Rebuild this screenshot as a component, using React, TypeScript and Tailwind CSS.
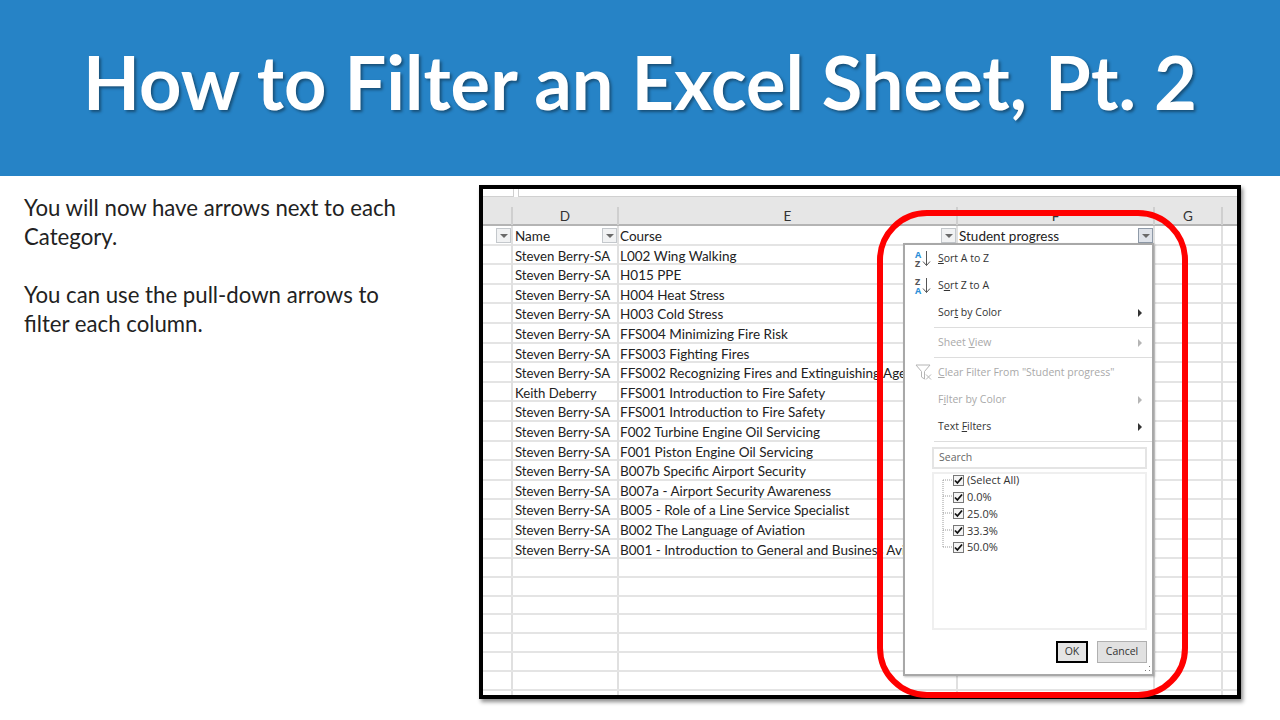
const rows = [
  ["Steven Berry-SA", "L002 Wing Walking"],
  ["Steven Berry-SA", "H015 PPE"],
  ["Steven Berry-SA", "H004 Heat Stress"],
  ["Steven Berry-SA", "H003 Cold Stress"],
  ["Steven Berry-SA", "FFS004 Minimizing Fire Risk"],
  ["Steven Berry-SA", "FFS003 Fighting Fires"],
  ["Steven Berry-SA", "FFS002 Recognizing Fires and Extinguishing Agents"],
  ["Keith Deberry", "FFS001 Introduction to Fire Safety"],
  ["Steven Berry-SA", "FFS001 Introduction to Fire Safety"],
  ["Steven Berry-SA", "F002 Turbine Engine Oil Servicing"],
  ["Steven Berry-SA", "F001 Piston Engine Oil Servicing"],
  ["Steven Berry-SA", "B007b Specific Airport Security"],
  ["Steven Berry-SA", "B007a - Airport Security Awareness"],
  ["Steven Berry-SA", "B005 - Role of a Line Service Specialist"],
  ["Steven Berry-SA", "B002 The Language of Aviation"],
  ["Steven Berry-SA", "B001 - Introduction to General and Business Aviation"],
];

const gridCols = "grid grid-cols-[30px_106px_339px_197px_68px_1fr]";
const cell = "border-r-2 border-[#e0e0e0] whitespace-nowrap";

const FilterButton = ({ active = false }: { active?: boolean }) => (
  <span
    className={`absolute right-0 top-[2px] flex h-[15px] w-[15px] items-center justify-center border ${
      active ? "border-[#8f9aa8] bg-[#dfe3ea]" : "border-[#c4c8cc] bg-[#f1f2f3]"
    }`}
  >
    <span className="h-0 w-0 border-x-[4px] border-t-[4px] border-x-transparent border-t-[#6a6a6a]" />
  </span>
);

const SortIcon = ({ first, second }: { first: string; second: string }) => (
  <span className="flex w-[33px] items-center pl-[10px]">
    <span className="flex flex-col text-[9px] font-bold leading-[9px]">
      <span className={first === "A" ? "text-[#2b8fd8]" : "text-[#555555]"}>{first}</span>
      <span className={second === "A" ? "text-[#2b8fd8]" : "text-[#555555]"}>{second}</span>
    </span>
    <svg width="9" height="17" viewBox="0 0 9 17" className="ml-[1px]">
      <path d="M4.5 1v14.5M1 11.5l3.5 4 3.5-4" fill="none" stroke="#555555" strokeWidth="1" />
    </svg>
  </span>
);

const ClearFilterIcon = () => (
  <span className="flex w-[33px] items-center pl-[10px]">
    <svg width="18" height="17" viewBox="0 0 18 17">
      <path d="M1 1h14l-5.5 6.5V15L6.5 13V7.5z" fill="none" stroke="#b5b5b5" strokeWidth="1" />
      <path d="M11 10.5l5 5M16 10.5l-5 5" fill="none" stroke="#b5b5b5" strokeWidth="1" />
    </svg>
  </span>
);

const MenuItem = ({
  children,
  icon,
  disabled = false,
  arrow = false,
}: {
  children: React.ReactNode;
  icon?: React.ReactNode;
  disabled?: boolean;
  arrow?: boolean;
}) => (
  <div className={`flex h-[27px] items-center ${disabled ? "text-[#a9a9a9]" : "text-[#333333]"}`}>
    {icon ?? <span className="w-[33px]" />}
    <span className="flex-1 whitespace-nowrap">{children}</span>
    {arrow && (
      <span
        className={`mr-[10px] h-0 w-0 border-y-[4px] border-l-[4px] border-y-transparent ${
          disabled ? "border-l-[#b5b5b5]" : "border-l-[#333333]"
        }`}
      />
    )}
  </div>
);

const Separator = () => <div className="my-[1px] ml-[29px] h-[1px] bg-[#dddddd]" />;

const CheckRow = ({ label }: { label: string }) => (
  <div className="flex h-[16.8px] items-center pl-[19px]">
    <span className="flex h-[11px] w-[11px] items-center justify-center border border-[#777777] bg-[#f4f4f4]">
      <svg width="9" height="9" viewBox="0 0 9 9">
        <path d="M1 4.5l2.4 2.5L8 1.5" fill="none" stroke="#111111" strokeWidth="1.8" />
      </svg>
    </span>
    <span className="ml-[3px] text-[#333333]">{label}</span>
  </div>
);

const FilterMenu = () => (
  <div className="absolute left-[420px] top-[54px] h-[433px] w-[251px] border-2 border-[#a8a8a8] bg-white font-['Open_Sans',sans-serif] text-[10.5px] shadow-[1px_1px_2px_rgba(0,0,0,0.25)]">
    <MenuItem icon={<SortIcon first="A" second="Z" />}>
      <u>S</u>ort A to Z
    </MenuItem>
    <MenuItem icon={<SortIcon first="Z" second="A" />}>
      S<u>o</u>rt Z to A
    </MenuItem>
    <MenuItem arrow>
      Sor<u>t</u> by Color
    </MenuItem>
    <Separator />
    <MenuItem disabled arrow>
      Sheet <u>V</u>iew
    </MenuItem>
    <Separator />
    <MenuItem disabled icon={<ClearFilterIcon />}>
      <u>C</u>lear Filter From "Student progress"
    </MenuItem>
    <MenuItem disabled arrow>
      F<u>i</u>lter by Color
    </MenuItem>
    <MenuItem arrow>
      Text <u>F</u>ilters
    </MenuItem>
    <Separator />
    <div className="mx-[27px] mr-[5px] mt-[5px] flex h-[22px] items-center border-2 border-[#e4e4e4] pl-[5px] text-[#666666]">
      Search
    </div>
    <div className="relative mx-[27px] mr-[5px] mt-[3px] h-[158px] border-2 border-[#efefef] text-[11px]">
      <svg width="12" height="72" viewBox="0 0 12 72" className="absolute left-[8px] top-[5px]">
        <path d="M1 1v67M1 1h10M1 17h10M1 34h10M1 51h10M1 68h10" fill="none" stroke="#9a9a9a" strokeWidth="1" strokeDasharray="1 1" />
      </svg>
      <div className="-mt-[2px]">
        <CheckRow label="(Select All)" />
        <CheckRow label="0.0%" />
        <CheckRow label="25.0%" />
        <CheckRow label="33.3%" />
        <CheckRow label="50.0%" />
      </div>
    </div>
    <div className="mr-[5px] mt-[11px] flex justify-end gap-[9px] text-[#333333]">
      <button className="h-[22px] w-[32px] border-2 border-black bg-[#e4e4e4]">OK</button>
      <button className="h-[22px] w-[50px] border border-[#b0b0b0] bg-[#e1e1e1]">Cancel</button>
    </div>
    <svg width="8" height="8" viewBox="0 0 8 8" className="absolute bottom-[1px] right-[1px]">
      <path d="M6 1h1v1H6zM2 5h1v1H2zM6 5h1v1H6z" fill="#777777" />
    </svg>
  </div>
);

const Sheet = () => (
  <div className="h-full overflow-hidden bg-white font-['Lato',sans-serif] text-[13.5px] text-[#222222]">
    <div className="flex h-[8px] bg-white">
      <div className="h-full w-[31px] border-b border-r border-[#d0d0d0]" />
      <div className="ml-[4px] flex-1 border-b border-l border-[#d0d0d0]" />
    </div>
    <div className={`${gridCols} h-[29px] border-b-2 border-[#b4b4b4] bg-[#e6e6e6] pt-[10px] text-center text-[#333333]`}>
      <div className="border-r-2 border-[#cfcfcf]" />
      <div className="border-r-2 border-[#cfcfcf] leading-[18px]">D</div>
      <div className="border-r-2 border-[#cfcfcf] leading-[18px]">E</div>
      <div className="border-r-2 border-[#cfcfcf] leading-[18px]">F</div>
      <div className="border-r-2 border-[#cfcfcf] leading-[18px]">G</div>
      <div />
    </div>
    <div className={`${gridCols} h-[19.6px] border-b-2 border-[#e4e4e4] leading-[20.5px]`}>
      <div className="relative border-r-2 border-[#e0e0e0]">
        <FilterButton />
      </div>
      <div className={`relative pl-[2px] ${cell}`}>
        Name
        <FilterButton />
      </div>
      <div className={`relative pl-[1px] ${cell}`}>
        Course
        <FilterButton />
      </div>
      <div className={`relative pl-[1px] ${cell}`}>
        Student progress
        <FilterButton active />
      </div>
      <div className="border-r-2 border-[#e0e0e0]" />
      <div />
    </div>
    {rows.map(([name, course], i) => (
      <div key={i} className={`${gridCols} h-[19.6px] border-b-2 border-[#e4e4e4] leading-[20.5px]`}>
        <div className="border-r-2 border-[#e0e0e0]" />
        <div className={`pl-[2px] text-[13.2px] ${cell}`}>{name}</div>
        <div className="pl-[1px] whitespace-nowrap">{course}</div>
        <div className="border-r-2 border-[#e0e0e0]" />
        <div className="border-r-2 border-[#e0e0e0]" />
        <div />
      </div>
    ))}
    {Array.from({ length: 8 }).map((_, i) => (
      <div key={i} className={`${gridCols} h-[18.8px] border-b-2 border-[#e4e4e4]`}>
        <div className="border-r-2 border-[#e0e0e0]" />
        <div className="border-r-2 border-[#e0e0e0]" />
        <div className="border-r-2 border-[#e0e0e0]" />
        <div className="border-r-2 border-[#e0e0e0]" />
        <div className="border-r-2 border-[#e0e0e0]" />
        <div />
      </div>
    ))}
  </div>
);

export default function App() {
  return (
    <div className="h-[720px] w-[1280px] overflow-hidden bg-white">
      <header className="flex h-[176px] items-center justify-center bg-[#2683c6] pb-[12px]">
        <h1 className="whitespace-nowrap font-['Lato',sans-serif] text-[74px] font-bold leading-none text-white [text-shadow:2px_2px_3px_rgba(0,0,0,0.4)]">
          How to Filter an Excel Sheet, Pt. 2
        </h1>
      </header>
      <main className="flex">
        <section className="w-[479px] pl-[24px] pt-[17px] font-['Lato',sans-serif] text-[22.2px] leading-[29px] text-[#222222]">
          <p>
            You will now have arrows next to each
            <br />
            Category.
          </p>
          <p className="mt-[29px]">
            You can use the pull-down arrows to
            <br />
            filter each column.
          </p>
        </section>
        <section className="relative mt-[9px] h-[514px] w-[762px] border-4 border-black shadow-[2px_3px_4px_rgba(0,0,0,0.45)]">
          <Sheet />
          <FilterMenu />
          <div className="absolute left-[394px] top-[21px] h-[488px] w-[311px] rounded-[50px] border-[6px] border-[#ff0000]" />
        </section>
      </main>
    </div>
  );
}
